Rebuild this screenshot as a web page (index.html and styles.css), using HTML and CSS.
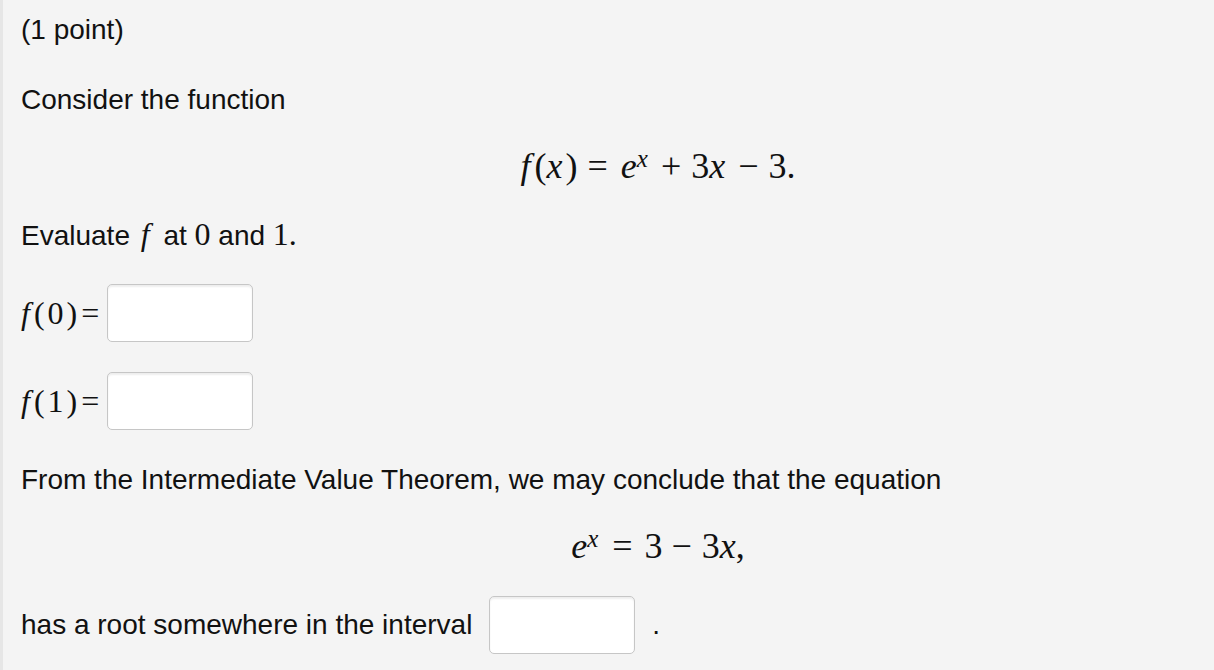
FILE: index.html
```html
<!DOCTYPE html>
<html>
<head>
<meta charset="utf-8">
<link rel="stylesheet" href="styles.css">
</head>
<body>
<div class="problem">
  <p class="line points">(1 point)</p>
  <p class="line">Consider the function</p>
  <div class="display"><span class="m"><i class="fn">f</i>(<i class="xp">x</i>)<span class="rel first">=</span><i>e</i><sup><i>x</i></sup><span class="bin">+</span>3<i>x</i><span class="bin">−</span>3.</span></div>
  <p class="line">Evaluate <span class="im"><i class="fn">f</i></span> at <span class="im">0</span> and <span class="im">1.</span></p>
  <div class="answer"><span class="im lbl"><i class="fn">f</i>(<span class="dg">0</span>)<span class="eq">=</span></span><span class="box"></span></div>
  <div class="answer"><span class="im lbl"><i class="fn">f</i>(<span class="dg">1</span>)<span class="eq">=</span></span><span class="box"></span></div>
  <p class="line from">From the Intermediate Value Theorem, we may conclude that the equation</p>
  <div class="display second"><span class="m"><i>e</i><sup><i>x</i></sup><span class="rel">=</span>3<span class="bin">−</span>3<i>x</i>,</span></div>
  <div class="answer last"><span class="txt">has a root somewhere in the interval</span><span class="box"></span><span class="dot">.</span></div>
</div>
</body>
</html>
```

FILE: styles.css
```css
html, body {
  margin: 0;
  padding: 0;
  background: #f4f4f4;
  overflow: hidden;
}
body {
  width: 1214px;
  height: 670px;
}
.problem {
  width: 1295px;
  height: 670px;
  box-sizing: border-box;
  border-left: 3px solid #e6e6e6;
  padding: 14px 0 0 18px;
  font-family: "Liberation Sans", Arial, Helvetica, sans-serif;
  font-size: 28px;
  color: #111;
}
.line {
  margin: 0;
  line-height: 32px;
  white-space: nowrap;
}
.line + .line { margin-top: 38px; }
.display {
  text-align: center;
  margin: 30px 0 34px;
  line-height: 40px;
  height: 40px;
  white-space: nowrap;
}
.display.second { margin-bottom: 30px; }
.m {
  font-family: "Liberation Serif", "Times New Roman", serif;
  font-size: 36px;
  color: #111;
}
.m sup {
  font-size: 25px;
  vertical-align: 0.45em;
  line-height: 0;
}
.m .fn { margin-right: 4px; }
.m .xp { margin-right: 3px; }
.rel { margin: 0 12px 0 6px; }
.rel.first { margin-left: 10px; margin-right: 13px; }
.m sup + .rel { margin-left: 14px; }
.bin { margin: 0 10px 0 9px; }
.m sup + .bin,
.m i + .bin { margin-left: 13px; }
.im {
  font-family: "Liberation Serif", "Times New Roman", serif;
  font-size: 32px;
  line-height: 0;
}
.line .fn { margin: 0 6px 0 3px; }
.lbl .fn { margin-right: 4px; }
.dg { margin: 0 3px; }
.eq { margin-left: 4px; }
.answer {
  display: flex;
  align-items: center;
  height: 58px;
  margin-top: 32px;
}
.answer + .answer { margin-top: 30px; }
.lbl { margin-right: 8px; }
.box {
  display: inline-block;
  width: 144px;
  height: 56px;
  background: #fff;
  border: 1px solid #c6c6c6;
  border-radius: 5px;
  box-shadow: inset 0 2px 2px rgba(0,0,0,0.07);
}
.from { margin-top: 34px; }
.answer.last { margin-top: 30px; }
.txt { margin-right: 17px; }
.dot { margin-left: 17px; }
```
